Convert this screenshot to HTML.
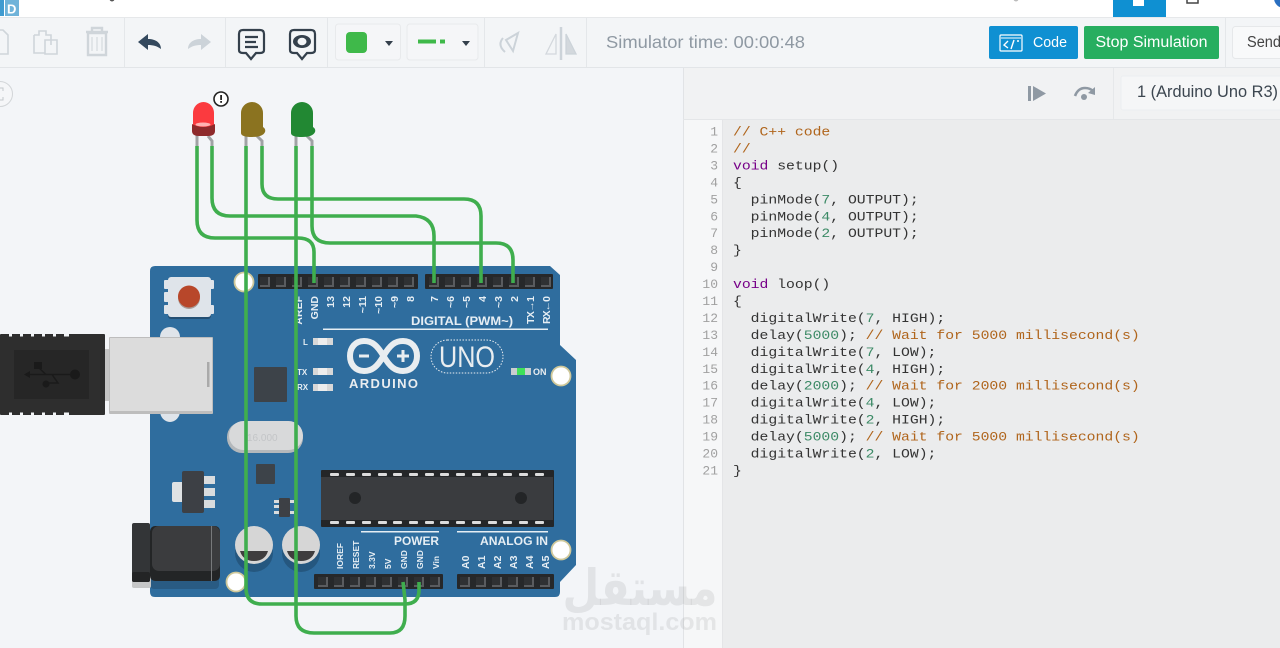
<!DOCTYPE html>
<html><head><meta charset="utf-8"><style>
html,body{margin:0;padding:0;width:1280px;height:648px;overflow:hidden;background:#f3f5f8}
svg{display:block;filter:blur(.3px)}
text{font-family:"Liberation Sans",sans-serif;white-space:pre}
.c text{font-family:"Liberation Mono",monospace;font-size:12.5px;fill:#333}
.c .k{fill:#770088}.c .n{fill:#3c8a66}.c .m{fill:#b0651c}
.ln text{font-family:"Liberation Mono",monospace;font-size:13px;fill:#a0a0a0;text-anchor:end}
.p text{font-size:10.5px;fill:#e6eef4;font-weight:bold;text-anchor:end}
.w path{fill:none;stroke:#3fae4e;stroke-width:3.6}
.ic{fill:none;stroke:#cfd5da;stroke-width:1.6}
</style></head><body>
<svg width="1280" height="648" viewBox="0 0 1280 648" xmlns="http://www.w3.org/2000/svg">
<defs>
<g id="cell"><rect width="16" height="15" fill="#26282a"/><rect x="3" y="3" width="10" height="10" fill="#5a5c5f"/><rect x="3" y="3" width="8" height="8" fill="#2f3133"/></g>
<pattern id="h1" patternUnits="userSpaceOnUse" x="257" y="274" width="16" height="15"><use href="#cell"/></pattern>
<pattern id="h2" patternUnits="userSpaceOnUse" x="426" y="274" width="16" height="15"><use href="#cell"/></pattern>
<pattern id="h3" patternUnits="userSpaceOnUse" x="315" y="574" width="16" height="15"><use href="#cell"/></pattern>
<pattern id="h4" patternUnits="userSpaceOnUse" x="457" y="574" width="16" height="15"><use href="#cell"/></pattern>
</defs>
<rect width="1280" height="648" fill="#f3f5f8"/>
<!-- top bar -->
<rect width="1280" height="17" fill="#fff"/>
<rect y="17" width="1280" height="1" fill="#e6e8ea"/>
<rect x="0" y="0" width="4" height="16" fill="#3f9bd0"/>
<rect x="5" y="0" width="14" height="16" fill="#6fb3d9"/>
<text x="7" y="13.500" font-size="13" font-weight="bold" fill="#fff">D</text>
<circle cx="112" cy="-1" r="2.500" fill="#555"/>
<circle cx="1016" cy="-1" r="2.500" fill="#bbb"/>
<rect x="1113" y="0" width="53" height="17" fill="#0f90d2"/>
<rect x="1133" y="0" width="11" height="6" fill="#fff"/>
<rect x="1187" y="-3" width="11" height="6" fill="none" stroke="#444" stroke-width="1.500"/>
<circle cx="1284" cy="-2" r="10" fill="#2a6fc0"/>
<!-- toolbar -->
<rect y="18" width="1280" height="49" fill="#f3f5f7"/>
<rect y="67" width="1280" height="1" fill="#e2e5e8"/>
<g fill="#e4e7ea"><rect x="124" y="18" width="1" height="49"/><rect x="225" y="18" width="1" height="49"/><rect x="327" y="18" width="1" height="49"/><rect x="484" y="18" width="1" height="49"/><rect x="586" y="18" width="1" height="49"/><rect x="1225" y="18" width="1" height="49"/></g>
<path class="ic" d="M-2 30H3L8 35V54H-2"/>
<path class="ic" d="M34 35H39V31H46V35H51V45M34 35V53H45M45 40H57V54H45Z"/>
<path d="M86 32H108M92 32V28H102V32M88 33H106V55H88Z" fill="none" stroke="#cfd5da" stroke-width="2.400"/>
<path d="M92 37V51M97 37V51M102 37V51" fill="none" stroke="#cfd5da" stroke-width="1"/>
<path d="M138 42L148 34V39C156 39 161 43 161 49C157 46 153 45 148 45V50Z" fill="#34495e"/>
<path d="M211 42L201 34V39C193 39 188 43 188 49C192 46 196 45 201 45V50Z" fill="#ccd3d9"/>
<path d="M243 30H260Q264 30 264 34V50Q264 53 260 53H256L251 59L246 53H243Q239 53 239 50V34Q239 30 243 30Z" fill="none" stroke="#34404c" stroke-width="2.200"/>
<path d="M245 37H258M245 42H256M245 47H258" stroke="#34404c" stroke-width="2.200" fill="none"/>
<path d="M294 30H311Q315 30 315 34V50Q315 53 311 53H307L302 59L297 53H294Q290 53 290 50V34Q290 30 294 30Z" fill="none" stroke="#34404c" stroke-width="2.200"/>
<ellipse cx="302" cy="41.500" rx="9" ry="6.500" fill="#34404c"/><ellipse cx="302" cy="41.500" rx="4.500" ry="3.800" fill="#f3f5f7"/>
<rect x="335.500" y="24" width="65" height="36" rx="3" fill="#f5f6f8" stroke="#e8eaec"/>
<rect x="346" y="32" width="21" height="21" rx="4" fill="#3fb94a"/>
<path d="M385 41H393L389 46Z" fill="#34404c"/>
<rect x="407" y="24" width="71" height="36" rx="3" fill="#f5f6f8" stroke="#e8eaec"/>
<rect x="418" y="39.500" width="18" height="4" fill="#3fb94a"/><rect x="440" y="39.500" width="5" height="4" fill="#3fb94a"/>
<path d="M462 41H470L466 46Z" fill="#34404c"/>
<path d="M518 33L506 40L513 51ZM503 38Q497 45 505 52" fill="none" stroke="#ccd3d9" stroke-width="2"/>
<path d="M561 27V60" stroke="#ccd3d9" stroke-width="2.500"/>
<path d="M556 34V54H546Z" fill="none" stroke="#d3d8dd" stroke-width="1.300"/>
<path d="M566 34V54H576Z" fill="#d3d8dd" stroke="#ccd3d9" stroke-width="1.300"/>
<text x="606" y="48" font-size="17.500" fill="#8f99a3" textLength="199" lengthAdjust="spacingAndGlyphs">Simulator time: 00:00:48</text>
<rect x="989" y="26" width="89" height="33" rx="2" fill="#0f90d2"/>
<rect x="1000" y="35" width="22" height="16" rx="1" fill="none" stroke="#fff" stroke-width="1.200"/>
<path d="M1001 38H1021" stroke="#fff" stroke-width="1"/>
<path d="M1008 41L1004 45L1008 48M1014 40L1011 49M1017 41L1019 41" stroke="#fff" stroke-width="1.400" fill="none"/>
<text x="1033" y="47" font-size="15" fill="#fff" textLength="34" lengthAdjust="spacingAndGlyphs">Code</text>
<rect x="1084" y="26" width="135" height="33" rx="2" fill="#27ae60"/>
<text x="1095.500" y="47" font-size="15.500" fill="#fff" textLength="112" lengthAdjust="spacingAndGlyphs">Stop Simulation</text>
<rect x="1232.500" y="26.500" width="60" height="32" rx="3" fill="#f8f9fa" stroke="#e6e8ea"/>
<text x="1247" y="47" font-size="15.500" fill="#444" textLength="34" lengthAdjust="spacingAndGlyphs">Send</text>
<!-- right panel -->
<rect x="683" y="68" width="597" height="52" fill="#f1f2f3"/>
<rect x="683" y="68" width="1" height="580" fill="#e1e3e6"/>
<rect x="1113" y="68" width="1" height="52" fill="#e6e8ea"/>
<rect x="1028" y="86" width="3" height="15" fill="#8f99a3"/><path d="M1033 86L1046 93.500L1033 101Z" fill="#8f99a3"/>
<path d="M1075 96Q1078 88 1085 88Q1090 88 1093 91" fill="none" stroke="#8f99a3" stroke-width="2.600"/><path d="M1088 93L1095 87V95Z" fill="#8f99a3"/><circle cx="1084" cy="97" r="3" fill="#8f99a3"/>
<rect x="1121" y="76" width="170" height="34" rx="2" fill="#f5f6f7" stroke="#eceef0"/>
<text x="1137" y="97" font-size="16.500" fill="#3c4650" textLength="141" lengthAdjust="spacingAndGlyphs">1 (Arduino Uno R3)</text>
<rect x="684" y="120" width="596" height="528" fill="#ebeced"/>
<rect x="684" y="120" width="38" height="528" fill="#f6f7f8"/>
<rect x="722" y="120" width="1" height="528" fill="#e4e5e7"/>
<rect x="683" y="119" width="597" height="1" fill="#e4e6e8"/>
<g class="ln">
<text x="718" y="135.500">1</text><text x="718" y="152.450">2</text><text x="718" y="169.400">3</text><text x="718" y="186.350">4</text><text x="718" y="203.300">5</text><text x="718" y="220.250">6</text><text x="718" y="237.200">7</text><text x="718" y="254.150">8</text><text x="718" y="271.100">9</text><text x="718" y="288">10</text><text x="718" y="305">11</text><text x="718" y="322">12</text><text x="718" y="339">13</text><text x="718" y="355.800">14</text><text x="718" y="372.800">15</text><text x="718" y="389.700">16</text><text x="718" y="406.700">17</text><text x="718" y="423.600">18</text><text x="718" y="440.600">19</text><text x="718" y="457.500">20</text><text x="718" y="474.500">21</text>
</g>
<g class="c">
<text transform="translate(733,135.500) scale(1.18,1)"><tspan class="m">// C++ code</tspan></text>
<text transform="translate(733,152.450) scale(1.18,1)"><tspan class="m">//</tspan></text>
<text transform="translate(733,169.400) scale(1.18,1)"><tspan class="k">void</tspan> setup()</text>
<text transform="translate(733,186.350) scale(1.18,1)">{</text>
<text transform="translate(733,203.300) scale(1.18,1)">  pinMode(<tspan class="n">7</tspan>, OUTPUT);</text>
<text transform="translate(733,220.250) scale(1.18,1)">  pinMode(<tspan class="n">4</tspan>, OUTPUT);</text>
<text transform="translate(733,237.200) scale(1.18,1)">  pinMode(<tspan class="n">2</tspan>, OUTPUT);</text>
<text transform="translate(733,254.150) scale(1.18,1)">}</text>
<text transform="translate(733,288) scale(1.18,1)"><tspan class="k">void</tspan> loop()</text>
<text transform="translate(733,305) scale(1.18,1)">{</text>
<text transform="translate(733,322) scale(1.18,1)">  digitalWrite(<tspan class="n">7</tspan>, HIGH);</text>
<text transform="translate(733,339) scale(1.18,1)">  delay(<tspan class="n">5000</tspan>); <tspan class="m">// Wait for 5000 millisecond(s)</tspan></text>
<text transform="translate(733,355.800) scale(1.18,1)">  digitalWrite(<tspan class="n">7</tspan>, LOW);</text>
<text transform="translate(733,372.800) scale(1.18,1)">  digitalWrite(<tspan class="n">4</tspan>, HIGH);</text>
<text transform="translate(733,389.700) scale(1.18,1)">  delay(<tspan class="n">2000</tspan>); <tspan class="m">// Wait for 2000 millisecond(s)</tspan></text>
<text transform="translate(733,406.700) scale(1.18,1)">  digitalWrite(<tspan class="n">4</tspan>, LOW);</text>
<text transform="translate(733,423.600) scale(1.18,1)">  digitalWrite(<tspan class="n">2</tspan>, HIGH);</text>
<text transform="translate(733,440.600) scale(1.18,1)">  delay(<tspan class="n">5000</tspan>); <tspan class="m">// Wait for 5000 millisecond(s)</tspan></text>
<text transform="translate(733,457.500) scale(1.18,1)">  digitalWrite(<tspan class="n">2</tspan>, LOW);</text>
<text transform="translate(733,474.500) scale(1.18,1)">}</text>
</g>
<!-- zoom ctl circle -->
<circle cx="0" cy="94" r="12.500" fill="#f5f6f8" stroke="#d2d5d8"/>
<path d="M0 88H3V91M3 97V100H0" fill="none" stroke="#c4c8cc"/>
<!-- board -->
<path d="M155 266H550L560 275V345L576 360V565L560 582V592Q560 597 555 597H155Q150 597 150 592V271Q150 266 155 266Z" fill="#2f6d9e"/>
<!-- reset -->
<g fill="#dfe4ea"><rect x="164" y="280" width="5" height="9" rx="1"/><rect x="164" y="292" width="5" height="10" rx="1"/><rect x="164" y="305" width="5" height="9" rx="1"/><rect x="209" y="280" width="5" height="9" rx="1"/><rect x="209" y="305" width="5" height="9" rx="1"/></g>
<rect x="168" y="277" width="43" height="42" rx="3" fill="#244f73"/>
<rect x="168" y="277" width="43" height="40" rx="3" fill="#dfe4ea"/>
<circle cx="189" cy="298" r="11" fill="#a99a95"/><circle cx="189" cy="296.500" r="11" fill="#b8472a"/>
<!-- usb -->
<ellipse cx="170" cy="337" rx="10" ry="10" fill="#dfe4ea"/><ellipse cx="170" cy="411" rx="10" ry="11" fill="#dfe4ea"/>
<rect x="105" y="349" width="6" height="52" fill="#c6c6c6"/>
<rect x="109" y="337" width="104" height="77" rx="1" fill="#bdbdbd"/>
<rect x="110" y="338" width="102" height="73" fill="#dcdcdc"/>
<rect x="207" y="362" width="2.500" height="25" fill="#aaa"/>
<rect x="0" y="334" width="105" height="81" rx="1" fill="#2e2e2e"/>
<rect x="14" y="350" width="75" height="49" fill="#262626"/>
<g fill="#f3f5f8"><rect x="9" y="334" width="3" height="2.500"/><rect x="20" y="334" width="3" height="2.500"/><rect x="31" y="334" width="3" height="2.500"/><rect x="42" y="334" width="3" height="2.500"/><rect x="53" y="334" width="3" height="2.500"/><rect x="64" y="334" width="5" height="2.500"/><rect x="9" y="412.500" width="3" height="2.500"/><rect x="20" y="412.500" width="3" height="2.500"/><rect x="31" y="412.500" width="3" height="2.500"/><rect x="42" y="412.500" width="3" height="2.500"/><rect x="53" y="412.500" width="3" height="2.500"/><rect x="64" y="412.500" width="5" height="2.500"/></g>
<g fill="#1a1a1a" stroke="none"><path d="M24 374.500L30 371V378Z"/><circle cx="75" cy="374.500" r="5"/><rect x="34" y="362" width="8" height="7"/><circle cx="46" cy="384" r="3.500"/></g>
<path d="M28 374.500H75M38 367L46 374.500H52L58 383H47" fill="none" stroke="#1a1a1a" stroke-width="1.500"/>
<!-- chips -->
<rect x="254" y="367" width="33" height="35" rx="1" fill="#3d4349"/>
<rect x="227" y="422" width="76" height="31" rx="15" fill="#b4b8bb"/><rect x="229" y="421" width="74" height="29" rx="14.500" fill="#d8d9da"/>
<text x="247" y="441" font-size="10" fill="#c3c5c7">16.000</text>
<rect x="256" y="464" width="19" height="20" rx="1" fill="#3d4349"/>
<rect x="172" y="482" width="13" height="20" rx="2" fill="#dfe2e4"/>
<g fill="#d9dcde"><rect x="203" y="476" width="12" height="8"/><rect x="203" y="488" width="12" height="8"/><rect x="203" y="500" width="12" height="8"/></g>
<rect x="182" y="471" width="22" height="42" rx="2" fill="#3d4045"/>
<g fill="#d9dcde"><rect x="274" y="500" width="6" height="3"/><rect x="274" y="505" width="6" height="3"/><rect x="274" y="511" width="6" height="3"/><rect x="289" y="500" width="5" height="3"/><rect x="289" y="511" width="5" height="3"/></g>
<rect x="279" y="498" width="11" height="19" rx="1" fill="#3d4045"/>
<!-- caps -->
<g>
<circle cx="254" cy="553" r="19" fill="#25577f"/><circle cx="301" cy="553" r="19" fill="#25577f"/>
<circle cx="254" cy="545" r="19" fill="#d6d6d6"/><circle cx="301" cy="545" r="19" fill="#d6d6d6"/>
<path d="M240 551H268Q265 561 254 561Q243 561 240 551Z" fill="#3f3d3e"/>
<path d="M287 551H315Q312 561 301 561Q290 561 287 551Z" fill="#3f3d3e"/>
</g>
<!-- jack -->
<rect x="150" y="540" width="69" height="49" rx="4" fill="#295b83"/>
<rect x="132" y="560" width="19" height="28" rx="2" fill="#c5c6c7"/>
<rect x="132" y="523" width="18" height="59" rx="2" fill="#333537"/>
<rect x="132" y="572" width="18" height="10" rx="2" fill="#232425"/>
<rect x="150" y="526" width="70" height="55" rx="5" fill="#232526"/>
<rect x="152" y="526" width="68" height="45" rx="7" fill="#3b3c3e"/>
<rect x="211" y="526" width="1" height="55" fill="#77797b"/>
<!-- atmega -->
<rect x="321" y="470" width="233" height="57" rx="1" fill="#242628"/>
<rect x="321" y="477" width="232" height="43" fill="#3a3c3f"/>
<g fill="#dcdcdc"><rect x="330" y="473" width="9" height="3" rx="1"/><rect x="346" y="473" width="9" height="3" rx="1"/><rect x="362" y="473" width="9" height="3" rx="1"/><rect x="378" y="473" width="9" height="3" rx="1"/><rect x="393" y="473" width="9" height="3" rx="1"/><rect x="409" y="473" width="9" height="3" rx="1"/><rect x="425" y="473" width="9" height="3" rx="1"/><rect x="440" y="473" width="9" height="3" rx="1"/><rect x="456" y="473" width="9" height="3" rx="1"/><rect x="472" y="473" width="9" height="3" rx="1"/><rect x="488" y="473" width="9" height="3" rx="1"/><rect x="503" y="473" width="9" height="3" rx="1"/><rect x="519" y="473" width="9" height="3" rx="1"/><rect x="535" y="473" width="9" height="3" rx="1"/>
<rect x="330" y="521" width="9" height="3" rx="1"/><rect x="346" y="521" width="9" height="3" rx="1"/><rect x="362" y="521" width="9" height="3" rx="1"/><rect x="378" y="521" width="9" height="3" rx="1"/><rect x="393" y="521" width="9" height="3" rx="1"/><rect x="409" y="521" width="9" height="3" rx="1"/><rect x="425" y="521" width="9" height="3" rx="1"/><rect x="440" y="521" width="9" height="3" rx="1"/><rect x="456" y="521" width="9" height="3" rx="1"/><rect x="472" y="521" width="9" height="3" rx="1"/><rect x="488" y="521" width="9" height="3" rx="1"/><rect x="503" y="521" width="9" height="3" rx="1"/><rect x="519" y="521" width="9" height="3" rx="1"/><rect x="535" y="521" width="9" height="3" rx="1"/></g>
<circle cx="355" cy="498" r="6" fill="#232527"/><circle cx="521" cy="498" r="6" fill="#232527"/>
<!-- holes -->
<g fill="#fff" stroke="#cfc89a" stroke-width="1.800"><circle cx="244" cy="282" r="9.500"/><circle cx="561" cy="376" r="9.500"/><circle cx="561" cy="550" r="9.500"/><circle cx="236" cy="582" r="9.500"/></g>
<!-- headers -->
<rect x="258" y="274" width="160" height="15" rx="1" fill="url(#h1)"/>
<rect x="425" y="274" width="128" height="15" rx="1" fill="url(#h2)"/>
<rect x="314" y="574" width="129" height="15" rx="1" fill="url(#h3)"/>
<rect x="457" y="574" width="97" height="15" rx="1" fill="url(#h4)"/>
<!-- labels -->
<g class="p">
<text transform="translate(302,296) rotate(-90)">AREF</text>
<text transform="translate(318,296) rotate(-90)">GND</text>
<text transform="translate(334,296) rotate(-90)">13</text><text transform="translate(350,296) rotate(-90)">12</text><text transform="translate(366,296) rotate(-90)">~11</text><text transform="translate(382,296) rotate(-90)">~10</text><text transform="translate(398,296) rotate(-90)">~9</text><text transform="translate(414,296) rotate(-90)">8</text>
<text transform="translate(438,296) rotate(-90)">7</text><text transform="translate(454,296) rotate(-90)">~6</text><text transform="translate(470,296) rotate(-90)">~5</text><text transform="translate(486,296) rotate(-90)">4</text><text transform="translate(502,296) rotate(-90)">~3</text><text transform="translate(518,296) rotate(-90)">2</text><text transform="translate(534,296) rotate(-90)" textLength="28">TX→1</text><text transform="translate(550,296) rotate(-90)" textLength="28">RX←0</text>
</g>
<g class="p">
<text transform="translate(343,569) rotate(-90)" style="text-anchor:start;font-size:8.500px">IOREF</text>
<text transform="translate(359,569) rotate(-90)" style="text-anchor:start;font-size:8.500px">RESET</text>
<text transform="translate(375,569) rotate(-90)" style="text-anchor:start;font-size:8.500px">3.3V</text>
<text transform="translate(391,569) rotate(-90)" style="text-anchor:start;font-size:8.500px">5V</text>
<text transform="translate(407,569) rotate(-90)" style="text-anchor:start;font-size:8.500px">GND</text>
<text transform="translate(423,569) rotate(-90)" style="text-anchor:start;font-size:8.500px">GND</text>
<text transform="translate(439,569) rotate(-90)" style="text-anchor:start;font-size:8.500px">Vin</text>
<text transform="translate(469,569) rotate(-90)" style="text-anchor:start">A0</text><text transform="translate(485,569) rotate(-90)" style="text-anchor:start">A1</text><text transform="translate(501,569) rotate(-90)" style="text-anchor:start">A2</text><text transform="translate(517,569) rotate(-90)" style="text-anchor:start">A3</text><text transform="translate(533,569) rotate(-90)" style="text-anchor:start">A4</text><text transform="translate(549,569) rotate(-90)" style="text-anchor:start">A5</text>
</g>
<text x="411" y="325" font-size="12" font-weight="bold" fill="#e6eef4" textLength="102" lengthAdjust="spacingAndGlyphs">DIGITAL (PWM~)</text>
<rect x="323" y="328.500" width="225" height="1.500" fill="#e6eef4"/>
<rect x="361" y="531" width="78" height="1.500" fill="#e6eef4"/><rect x="457" y="531" width="91" height="1.500" fill="#e6eef4"/>
<text x="394" y="545" font-size="12" font-weight="bold" fill="#e6eef4" textLength="45" lengthAdjust="spacingAndGlyphs">POWER</text>
<text x="480" y="545" font-size="12" font-weight="bold" fill="#e6eef4" textLength="68" lengthAdjust="spacingAndGlyphs">ANALOG IN</text>
<text x="303" y="345" font-size="8" font-weight="bold" fill="#e6eef4">L</text>
<text x="297" y="375" font-size="8" font-weight="bold" fill="#e6eef4">TX</text>
<text x="297" y="390" font-size="8" font-weight="bold" fill="#e6eef4">RX</text>
<g fill="#d8d8d8"><rect x="313" y="338" width="20" height="7"/><rect x="313" y="368" width="20" height="7"/><rect x="313" y="384" width="20" height="7"/></g>
<g fill="#fff" opacity=".55"><rect x="318" y="338" width="9" height="7"/><rect x="318" y="368" width="9" height="7"/><rect x="318" y="384" width="9" height="7"/></g>
<!-- logo -->
<g fill="none" stroke="#e9edf0" stroke-width="6">
<path d="M383.500 356C377 345 372 341 364 341C355 341 350 348 350 356C350 364 355 371 364 371C372 371 377 367 383.500 356C390 345 395 341 403 341C412 341 417 348 417 356C417 364 412 371 403 371C395 371 390 367 383.500 356Z"/>
</g>
<path d="M359 356H369M397 356H409M403 350V362" stroke="#e9edf0" stroke-width="3" fill="none"/>
<text x="349" y="388" font-size="13" font-weight="bold" fill="#e9edf0" textLength="69" lengthAdjust="spacing">ARDUINO</text>
<rect x="431" y="340" width="72" height="33" rx="16.500" fill="none" stroke="#e9edf0" stroke-width="1" stroke-dasharray="1.500 1.500"/>
<text x="439" y="367" font-size="30" fill="#e9edf0" textLength="56" lengthAdjust="spacingAndGlyphs">UNO</text>
<rect x="511" y="368" width="20" height="7" fill="#c9cdd0"/><rect x="517" y="368" width="8" height="7" fill="#3fe05a"/>
<text x="533" y="375" font-size="9" font-weight="bold" fill="#e9edf0">ON</text>
<!-- LED legs -->
<g fill="none" stroke="#a0a2a5" stroke-width="3">
<path d="M197 134V148M208 136L212 141V148M246 134V148M257 136L262 141V148M296 134V148M307 136L312 141V148"/>
</g>
<!-- wires -->
<g class="w">
<path d="M197 146V220Q197 238 215 238H298Q314 238 314 252V283"/>
<path d="M212 146V198Q212 216 230 216H416Q434 218 434 236V283"/>
<path d="M262 146V184Q262 199 278 199H464Q481 199 481 216V283"/>
<path d="M312 146V226Q312 243 330 243H496Q513 243 513 260V283"/>
<path d="M246 146V588Q246 604 262 604H405Q419 604 419 590V582"/>
<path d="M296 146V616Q296 633 314 633H390Q405 633 405 616V600Q404 590 403 582"/>
</g>
<!-- LEDs -->
<path d="M193 128V113A10.500 11 0 0 1 214 113V128Z" fill="#fb3a3f"/>
<path d="M192 124Q203 130 215 124V131Q215 136 208 136H199Q192 136 192 131Z" fill="#8e2a2c"/>
<ellipse cx="203" cy="124.500" rx="7.500" ry="2" fill="#ffb3b3"/>
<path d="M241 133V113A11 11 0 0 1 263 113V127Q266 129 265 132Q263 137 252 137Q241 137 241 133Z" fill="#8b7320"/>
<path d="M291 133V113A11 11 0 0 1 313 113V127Q316 129 315 132Q313 137 302 137Q291 137 291 133Z" fill="#228833"/>
<circle cx="221" cy="99" r="7" fill="#fff" stroke="#222" stroke-width="1.600"/>
<rect x="220.200" y="95" width="1.800" height="5" fill="#222"/><rect x="220.200" y="101" width="1.800" height="1.800" fill="#222"/>
<!-- watermark -->
<text x="640" y="605" font-size="50" font-weight="bold" text-anchor="middle" fill="#7a7a7a" fill-opacity=".14" style="font-family:'DejaVu Sans',sans-serif" textLength="155" lengthAdjust="spacingAndGlyphs" direction="rtl">مستقل</text>
<text x="562" y="630" font-size="24" font-weight="bold" fill="#7a7a7a" fill-opacity=".14" textLength="155" lengthAdjust="spacingAndGlyphs">mostaql.com</text>
</svg>
</body></html>
